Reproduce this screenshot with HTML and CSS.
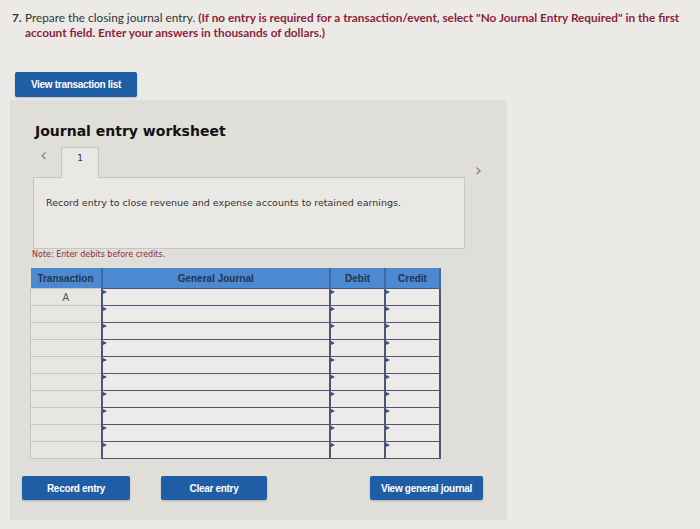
FILE: index.html
```html
<!DOCTYPE html>
<html lang="en">
<head>
    <meta charset="UTF-8">
    <title>Journal entry worksheet</title>
    <link rel="stylesheet" href="styles.css">
</head>
<body>
    <div class="question">
        <span class="num">7.</span>
        <p class="q-text">Prepare the closing journal entry. <b class="hint">(If no entry is required for a transaction/event, select "No Journal Entry Required" in the first account field. Enter your answers in thousands of dollars.)</b></p>
    </div>

    <button class="btn btn-list">View transaction list</button>

    <div class="worksheet">
        <h2 class="ws-title">Journal entry worksheet</h2>

        <div class="tabs">
            <span class="arrow">&lsaquo;</span>
            <div class="tab">1</div>
            <span class="arrow arrow-next">&rsaquo;</span>
        </div>
        <div class="entry-box">Record entry to close revenue and expense accounts to retained earnings.</div>

        <div class="note">Note: Enter debits before credits.</div>

        <table class="journal">
            <thead>
                <tr>
                    <th class="c-trans">Transaction</th>
                    <th class="c-gj">General Journal</th>
                    <th class="c-num">Debit</th>
                    <th class="c-num">Credit</th>
                </tr>
            </thead>
            <tbody>
                <tr><td class="trans">A</td><td class="inp"></td><td class="inp"></td><td class="inp"></td></tr>
                <tr><td class="trans"></td><td class="inp"></td><td class="inp"></td><td class="inp"></td></tr>
                <tr><td class="trans"></td><td class="inp"></td><td class="inp"></td><td class="inp"></td></tr>
                <tr><td class="trans"></td><td class="inp"></td><td class="inp"></td><td class="inp"></td></tr>
                <tr><td class="trans"></td><td class="inp"></td><td class="inp"></td><td class="inp"></td></tr>
                <tr><td class="trans"></td><td class="inp"></td><td class="inp"></td><td class="inp"></td></tr>
                <tr><td class="trans"></td><td class="inp"></td><td class="inp"></td><td class="inp"></td></tr>
                <tr><td class="trans"></td><td class="inp"></td><td class="inp"></td><td class="inp"></td></tr>
                <tr><td class="trans"></td><td class="inp"></td><td class="inp"></td><td class="inp"></td></tr>
                <tr><td class="trans"></td><td class="inp"></td><td class="inp"></td><td class="inp"></td></tr>
            </tbody>
        </table>

        <div class="actions">
            <button class="btn btn-record">Record entry</button>
            <button class="btn btn-clear">Clear entry</button>
            <button class="btn btn-general">View general journal</button>
        </div>
    </div>
</body>
</html>
```

FILE: styles.css
```css
body {
    margin: 0;
    background-color: #ebeae6;
    font-family: Lato, "Open Sans", sans-serif;
    color: #333;
}
.question {
    display: flex;
    padding: 10px 10px 0 12px;
    font-size: 11.8px;
    line-height: 15px;
}
.num {
    font-weight: bold;
    width: 13px;
    flex-shrink: 0;
}
.q-text {
    margin: 0;
}
.hint {
    color: #8e1f3c;
}
.btn {
    background-color: #1f5ea4;
    color: #fff;
    border: none;
    border-radius: 2px;
    font-family: "Liberation Sans", Arial, sans-serif;
    font-weight: bold;
    font-size: 10px;
    letter-spacing: -0.3px;
    height: 24px;
    box-shadow: 0 1px 2px rgba(0, 0, 0, 0.2);
}
.btn-list {
    display: block;
    margin: 32px 0 0 15px;
    width: 122px;
    height: 25px;
}
.worksheet {
    width: 475px;
    margin: 3px 0 0 10px;
    padding: 23px 10px 20px 12px;
    background-color: #dfded9;
    font-family: "DejaVu Sans", Verdana, sans-serif;
}
.ws-title {
    margin: 0 0 0 13px;
    font-size: 14px;
    color: #111;
}
.tabs {
    display: flex;
    align-items: flex-start;
    margin-top: 8px;
    height: 30px;
    padding-left: 18px;
}
.arrow {
    font-size: 18px;
    line-height: 14px;
    color: #888;
    margin-top: 1px;
    width: 21px;
}
.arrow-next {
    margin-left: auto;
    margin-top: 16px;
    width: auto;
    margin-right: 15px;
}
.tab {
    width: 36px;
    height: 30px;
    margin-bottom: -1px;
    border: 1px solid #c6c5c1;
    border-bottom: none;
    background-color: #e9e8e4;
    font-size: 9px;
    text-align: center;
    line-height: 20px;
    position: relative;
    z-index: 1;
}
.entry-box {
    margin-left: 11px;
    width: 418px;
    height: 51px;
    padding: 19px 0 0 12px;
    border: 1px solid #c6c5c1;
    background-color: #e9e8e4;
    font-size: 9.5px;
    color: #333;
}
.note {
    margin: 1px 0 0 10px;
    font-size: 8px;
    color: #8e2a3c;
}
.journal {
    margin: 9px 0 0 8px;
    width: 411px;
    border-collapse: collapse;
    font-family: "Liberation Sans", Arial, sans-serif;
}
.journal th {
    background-color: #4c89d0;
    color: #23344f;
    font-size: 10px;
    height: 20px;
    padding: 0;
    border-right: 2px solid #3b6aa6;
}
.c-trans {
    width: 70px;
}
.c-num {
    width: 53px;
}
.journal td {
    height: 16px;
    padding: 0;
}
.trans {
    background-color: #e7e6e2;
    border: 1px solid #c7c6c3;
    text-align: center;
    font-size: 10px;
    color: #555;
}
.inp {
    background-color: #ecebe7;
    border: 2px solid #4d5673;
    border-top-width: 1px;
    border-bottom-width: 1px;
    position: relative;
}
.inp::before {
    content: "";
    position: absolute;
    top: 1px;
    left: 0;
    border-left: 4px solid #2f4f8c;
    border-top: 2px solid transparent;
    border-bottom: 2px solid transparent;
}
.actions {
    display: flex;
    margin: 17px 0 0;
    width: 461px;
}
.btn-record {
    width: 108px;
}
.btn-clear {
    width: 106px;
    margin-left: 31px;
}
.btn-general {
    width: 113px;
    margin-left: auto;
}
```
